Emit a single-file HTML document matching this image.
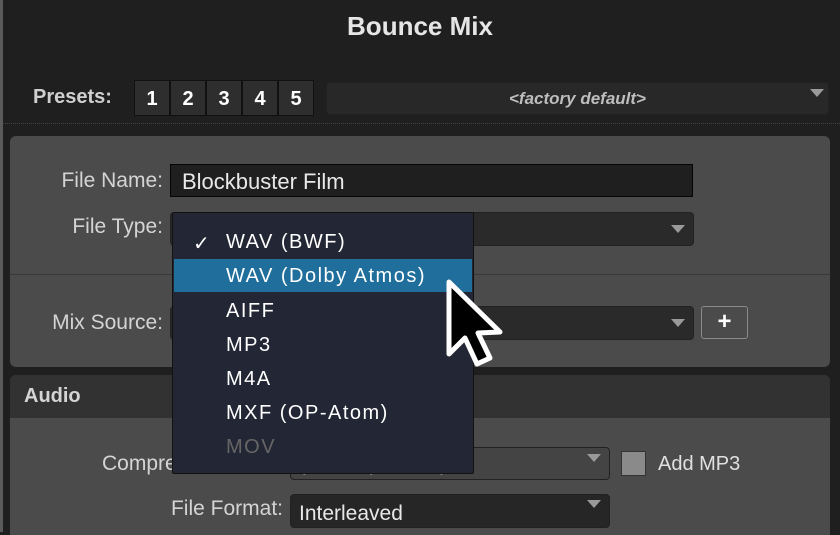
<!DOCTYPE html>
<html><head><style>
body{margin:0;width:840px;height:532px;background:#1f1f1f;overflow:hidden;position:relative;font-family:"Liberation Sans",Arial,sans-serif}
.a{position:absolute}
.lbl{color:#d4d4d4;font-size:21px;text-align:right}
.dd{background:#2a2a2a;border-radius:4px;border:1px solid #222}
.tri{position:absolute;right:8px;top:12px;width:0;height:0;border-left:7px solid transparent;border-right:7px solid transparent;border-top:8px solid #9a9a9a}
.pb{position:absolute;top:80px;width:34px;height:34px;background:#2e2e2e;border:1px solid #111;color:#fff;font-weight:bold;font-size:20px;text-align:center;line-height:36px}
.mi{position:absolute;left:53px;color:#fff;font-size:20px;letter-spacing:1.5px}
</style></head><body>
<div class="a" style="left:0;top:0;width:3px;height:532px;background:#5a5a5a"></div>
<div class="a" style="left:0;top:11px;width:840px;text-align:center;color:#e6e6e6;font-weight:bold;font-size:26px">Bounce Mix</div>
<div class="a" style="left:33px;top:86px;color:#cfcfcf;font-weight:bold;font-size:20px">Presets:</div>
<div class="pb" style="left:134px">1</div><div class="pb" style="left:170px">2</div><div class="pb" style="left:206px">3</div><div class="pb" style="left:242px">4</div><div class="pb" style="left:278px">5</div>
<div class="a dd" style="left:326px;top:82px;width:501px;height:31px;background:#282828"><div style="position:absolute;left:0;right:0;top:6px;text-align:center;color:#bdbdbd;font-style:italic;font-weight:bold;font-size:17px">&lt;factory default&gt;</div><div class="tri" style="top:6px;right:4px"></div></div>
<div class="a" style="left:3px;top:123px;width:837px;border-top:1px dotted #444"></div>
<div class="a" style="left:10px;top:136px;width:820px;height:231px;background:#4b4b4b;border-radius:6px"></div>
<div class="a" style="left:10px;top:274px;width:820px;border-top:1px solid #3a3a3a"></div>
<div class="a lbl" style="left:10px;top:169px;width:153px">File Name:</div>
<div class="a" style="left:170px;top:164px;width:521px;height:31px;background:#1f1f1f;border:1px solid #050505"><span style="position:absolute;left:11px;top:4px;color:#e8e8e8;font-size:22px">Blockbuster Film</span></div>
<div class="a lbl" style="left:10px;top:215px;width:153px">File Type:</div>
<div class="a dd" style="left:170px;top:212px;width:522px;height:32px"><div class="tri"></div></div>
<div class="a lbl" style="left:10px;top:311px;width:153px">Mix Source:</div>
<div class="a dd" style="left:170px;top:306px;width:522px;height:32px"><div class="tri"></div></div>
<div class="a" style="left:701px;top:306px;width:45px;height:31px;border:1px solid #8a8a8a;border-radius:3px;color:#fff;font-weight:bold;font-size:24px;text-align:center;line-height:30px">+</div>
<div class="a" style="left:10px;top:375px;width:820px;height:160px;background:#4b4b4b;border-radius:6px 6px 0 0;overflow:hidden"><div style="height:43px;background:#323232"></div></div>
<div class="a" style="left:24px;top:385px;color:#d4d4d4;font-weight:bold;font-size:20px">Audio</div>
<div class="a lbl" style="left:102px;top:452px;text-align:left">Compression</div>
<div class="a dd" style="left:290px;top:447px;width:318px;height:31px;background:#444"><span style="position:absolute;left:8px;top:6px;color:#888;font-size:20px">(Uncompressed)</span><div class="tri" style="top:6px"></div></div>
<div class="a" style="left:621px;top:451px;width:23px;height:23px;background:#8a8a8a;border:1px solid #333"></div>
<div class="a" style="left:658px;top:453px;color:#e0e0e0;font-size:20px">Add MP3</div>
<div class="a lbl" style="left:100px;top:497px;width:183px">File Format:</div>
<div class="a dd" style="left:290px;top:494px;width:318px;height:32px;background:#262626"><span style="position:absolute;left:8px;top:7px;color:#e8e8e8;font-size:21px">Interleaved</span><div class="tri" style="top:5px"></div></div>
<div class="a" style="left:172px;top:212px;width:300px;height:260px;background:#232634;border:1px solid #111;border-radius:2px">
<div class="mi" style="left:20px;top:18px">✓</div>
<div class="mi" style="top:18px">WAV (BWF)</div>
<div style="position:absolute;left:1px;right:1px;top:46px;height:33px;background:#1f6e9c"></div>
<div class="mi" style="top:52px">WAV (Dolby Atmos)</div>
<div class="mi" style="top:87px">AIFF</div>
<div class="mi" style="top:121px">MP3</div>
<div class="mi" style="top:155px">M4A</div>
<div class="mi" style="top:189px">MXF (OP-Atom)</div>
<div class="mi" style="top:223px;color:#666">MOV</div>
</div>
<svg class="a" style="left:440px;top:276px" width="70" height="95" viewBox="0 0 70 95"><path d="M9 6 L9 78 L25 62 L37 88 L50 82 L38 57 L60 56 Z" fill="#000" stroke="#fff" stroke-width="5" stroke-linejoin="round"/></svg>
</body></html>
